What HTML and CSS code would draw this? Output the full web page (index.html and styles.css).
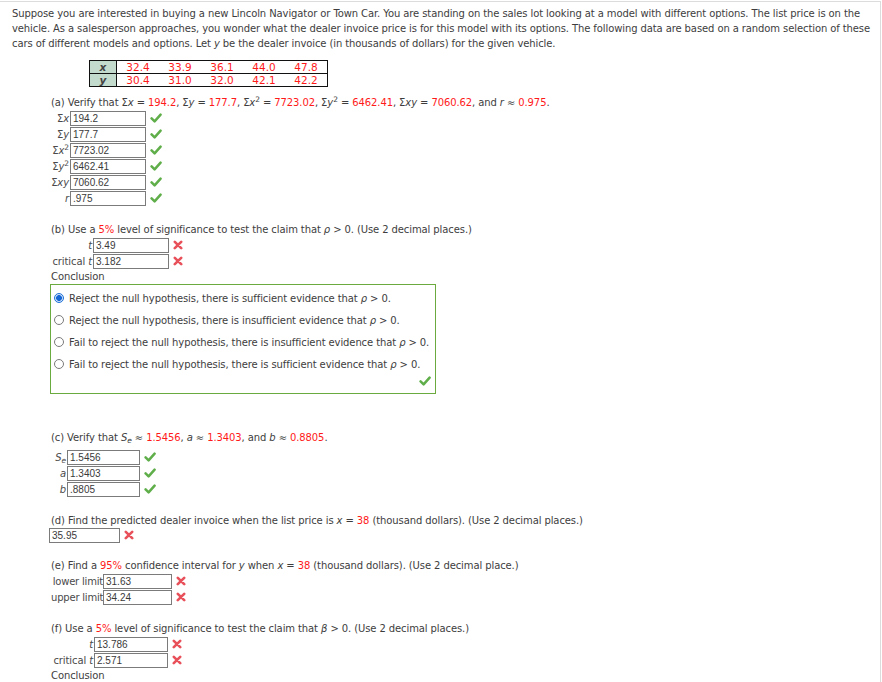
FILE: index.html
```html
<!DOCTYPE html>
<html>
<head>
<meta charset="utf-8">
<link rel="stylesheet" href="styles.css">
</head>
<body>
<div class="frame">
  <p class="intro">Suppose you are interested in buying a new Lincoln Navigator or Town Car. You are standing on the sales lot looking at a model with different options. The list price is on the<br>vehicle. As a salesperson approaches, you wonder what the dealer invoice price is for this model with its options. The following data are based on a random selection of these<br>cars of different models and options. Let <i>y</i> be the dealer invoice (in thousands of dollars) for the given vehicle.</p>

  <table class="data">
    <tr><th><i>x</i></th><td>32.4</td><td>33.9</td><td>36.1</td><td>44.0</td><td>47.8</td></tr>
    <tr><th><i>y</i></th><td>30.4</td><td>31.0</td><td>32.0</td><td>42.1</td><td>42.2</td></tr>
  </table>

  <div class="part">
    <div class="q qa">(a) Verify that Σ<i>x</i> = <span class="r">194.2</span>, Σ<i>y</i> = <span class="r">177.7</span>, Σ<i>x</i><sup>2</sup> = <span class="r">7723.02</span>, Σ<i>y</i><sup>2</sup> = <span class="r">6462.41</span>, Σ<i>xy</i> = <span class="r">7060.62</span>, and <i>r</i> ≈ <span class="r">0.975</span>.</div>
    <div class="rows ra">
      <div class="row"><span class="lab">Σ<i>x</i></span><span class="inp">194.2</span><svg class="ok" viewBox="0 0 12 10"><path d="M1.6 5.4 L4.6 8.4 L10.6 1.6"/></svg></div>
      <div class="row"><span class="lab">Σ<i>y</i></span><span class="inp">177.7</span><svg class="ok" viewBox="0 0 12 10"><path d="M1.6 5.4 L4.6 8.4 L10.6 1.6"/></svg></div>
      <div class="row"><span class="lab">Σ<i>x</i><sup>2</sup></span><span class="inp">7723.02</span><svg class="ok" viewBox="0 0 12 10"><path d="M1.6 5.4 L4.6 8.4 L10.6 1.6"/></svg></div>
      <div class="row"><span class="lab">Σ<i>y</i><sup>2</sup></span><span class="inp">6462.41</span><svg class="ok" viewBox="0 0 12 10"><path d="M1.6 5.4 L4.6 8.4 L10.6 1.6"/></svg></div>
      <div class="row"><span class="lab">Σ<i>xy</i></span><span class="inp">7060.62</span><svg class="ok" viewBox="0 0 12 10"><path d="M1.6 5.4 L4.6 8.4 L10.6 1.6"/></svg></div>
      <div class="row"><span class="lab"><i>r</i></span><span class="inp">.975</span><svg class="ok" viewBox="0 0 12 10"><path d="M1.6 5.4 L4.6 8.4 L10.6 1.6"/></svg></div>
    </div>

    <div class="q qb">(b) Use a <span class="r">5%</span> level of significance to test the claim that <i>ρ</i> &gt; 0. (Use 2 decimal places.)</div>
    <div class="rows rb">
      <div class="row"><span class="lab"><i>t</i></span><span class="inp">3.49</span><svg class="bad" viewBox="0 0 10 10"><path d="M1.8 1.8 L8.2 8.2 M8.2 1.8 L1.8 8.2"/></svg></div>
      <div class="row"><span class="lab">critical <i>t</i></span><span class="inp">3.182</span><svg class="bad" viewBox="0 0 10 10"><path d="M1.8 1.8 L8.2 8.2 M8.2 1.8 L1.8 8.2"/></svg></div>
    </div>
    <div class="q">Conclusion</div>
    <div class="choices">
      <div class="opt"><span class="radio on"></span><span class="opt-text">Reject the null hypothesis, there is sufficient evidence that <i>ρ</i> &gt; 0.</span></div>
      <div class="opt"><span class="radio"></span><span class="opt-text">Reject the null hypothesis, there is insufficient evidence that <i>ρ</i> &gt; 0.</span></div>
      <div class="opt"><span class="radio"></span><span class="opt-text">Fail to reject the null hypothesis, there is insufficient evidence that <i>ρ</i> &gt; 0.</span></div>
      <div class="opt"><span class="radio"></span><span class="opt-text">Fail to reject the null hypothesis, there is sufficient evidence that <i>ρ</i> &gt; 0.</span></div>
      <div class="choice-mark"><svg class="ok" viewBox="0 0 12 10"><path d="M1.6 5.4 L4.6 8.4 L10.6 1.6"/></svg></div>
    </div>

    <div class="q qc">(c) Verify that <i>S<sub>e</sub></i> ≈ <span class="r">1.5456</span>, <i>a</i> ≈ <span class="r">1.3403</span>, and <i>b</i> ≈ <span class="r">0.8805</span>.</div>
    <div class="rows rc">
      <div class="row"><span class="lab"><i>S<sub>e</sub></i></span><span class="inp">1.5456</span><svg class="ok" viewBox="0 0 12 10"><path d="M1.6 5.4 L4.6 8.4 L10.6 1.6"/></svg></div>
      <div class="row"><span class="lab"><i>a</i></span><span class="inp">1.3403</span><svg class="ok" viewBox="0 0 12 10"><path d="M1.6 5.4 L4.6 8.4 L10.6 1.6"/></svg></div>
      <div class="row"><span class="lab"><i>b</i></span><span class="inp">.8805</span><svg class="ok" viewBox="0 0 12 10"><path d="M1.6 5.4 L4.6 8.4 L10.6 1.6"/></svg></div>
    </div>

    <div class="q qd">(d) Find the predicted dealer invoice when the list price is <i>x</i> = <span class="r">38</span> (thousand dollars). (Use 2 decimal places.)</div>
    <div class="rows rd">
      <div class="row"><span class="inp">35.95</span><svg class="bad" viewBox="0 0 10 10"><path d="M1.8 1.8 L8.2 8.2 M8.2 1.8 L1.8 8.2"/></svg></div>
    </div>

    <div class="q qe">(e) Find a <span class="r">95%</span> confidence interval for <i>y</i> when <i>x</i> = <span class="r">38</span> (thousand dollars). (Use 2 decimal place.)</div>
    <div class="rows re">
      <div class="row"><span class="lab">lower limit</span><span class="inp">31.63</span><svg class="bad" viewBox="0 0 10 10"><path d="M1.8 1.8 L8.2 8.2 M8.2 1.8 L1.8 8.2"/></svg></div>
      <div class="row"><span class="lab">upper limit</span><span class="inp">34.24</span><svg class="bad" viewBox="0 0 10 10"><path d="M1.8 1.8 L8.2 8.2 M8.2 1.8 L1.8 8.2"/></svg></div>
    </div>

    <div class="q qf">(f) Use a <span class="r">5%</span> level of significance to test the claim that <i>β</i> &gt; 0. (Use 2 decimal places.)</div>
    <div class="rows rf">
      <div class="row"><span class="lab"><i>t</i></span><span class="inp">13.786</span><svg class="bad" viewBox="0 0 10 10"><path d="M1.8 1.8 L8.2 8.2 M8.2 1.8 L1.8 8.2"/></svg></div>
      <div class="row"><span class="lab">critical <i>t</i></span><span class="inp">2.571</span><svg class="bad" viewBox="0 0 10 10"><path d="M1.8 1.8 L8.2 8.2 M8.2 1.8 L1.8 8.2"/></svg></div>
    </div>
    <div class="q">Conclusion</div>
  </div>
</div>
</body>
</html>
```

FILE: styles.css
```css
html, body {
  margin: 0;
  padding: 0;
  background: #fff;
}
body {
  padding-top: 1px;
  font-family: "DejaVu Sans", Verdana, sans-serif;
  font-size: 10px;
  letter-spacing: -0.1px;
  color: #3d3d3d;
}
.frame {
  width: 881px;
  height: 681px;
  box-sizing: border-box;
  border-top: 1px solid #dcdcdc;
  border-right: 1px solid #dcdcdc;
  padding: 4px 0 0 12px;
  overflow: hidden;
}
.intro {
  margin: 0;
  line-height: 15px;
  white-space: nowrap;
}
.r { color: #ff1a1a; }
sup {
  font-size: 7.5px;
  line-height: 0;
  vertical-align: 4px;
}
sub {
  font-size: 7.5px;
  line-height: 0;
  vertical-align: -2px;
}

/* data table */
.data {
  margin: 9px 0 0 77px;
  border-collapse: collapse;
  border: 1px solid #111;
  letter-spacing: 0;
  font-size: 10.5px;
}
.data th {
  width: 26px;
  height: 12px;
  padding: 0;
  background: #c2dbcd;
  border-right: 1px solid #111;
  border-bottom: 1px solid #111;
  font-weight: bold;
  color: #444;
  line-height: 12px;
  text-align: center;
}
.data tr:last-child th { border-bottom: none; }
.data tr:first-child td { border-bottom: 1px solid #111; }
.data td {
  width: 42px;
  height: 12px;
  padding: 0;
  text-align: center;
  color: #ff1a1a;
  line-height: 12px;
}

/* parts */
.part {
  margin-left: 39px;
}
.q {
  line-height: 15px;
  white-space: nowrap;
}
.qa { margin-top: 8px; }
.qb { margin-top: 16px; }
.qc { margin-top: 36px; }
.qd { margin-top: 16px; }
.qe { margin-top: 15px; }
.qf { margin-top: 16px; }

.rows { display: flex; flex-direction: column; }
.rc { margin-top: 4px; }
.rd { margin-top: -1px; margin-left: -2px; }
.row {
  display: flex;
  align-items: center;
  height: 16px;
}
.lab {
  flex: none;
  text-align: right;
  color: #4a4a4a;
  padding-right: 1px;
  white-space: nowrap;
}
.inp {
  flex: none;
  box-sizing: border-box;
  height: 15px;
  border: 1px solid #7b7b7b;
  padding: 0 2px;
  font-family: "Liberation Sans", Arial, sans-serif;
  font-size: 10px;
  letter-spacing: 0;
  line-height: 13px;
  color: #3a3a3a;
  background: #fff;
}
.ra .lab { width: 18px; }
.ra .inp { width: 76px; }
.rb .lab { width: 41px; }
.rb .inp { width: 76px; }
.rf .lab { width: 42px; }
.rf .inp { width: 74px; }
.rc .lab { width: 15px; }
.rc .inp { width: 73px; }
.rd .inp { width: 71px; }
.re .lab { width: 52px; padding-right: 0; letter-spacing: -0.2px; }
.re .inp { width: 69px; }

svg.ok {
  flex: none;
  width: 12px;
  height: 10px;
  margin-left: 4px;
  fill: none;
  stroke: #5fae4a;
  stroke-width: 2.5;
  stroke-linecap: round;
  stroke-linejoin: round;
}
svg.bad {
  flex: none;
  width: 10px;
  height: 10px;
  margin-left: 4px;
  fill: none;
  stroke: #e8505a;
  stroke-width: 2.6;
  stroke-linecap: round;
}

/* choices */
.choices {
  margin-left: -1px;
  width: 386px;
  height: 110px;
  box-sizing: border-box;
  border: 1px solid #6aaa3e;
  padding: 2px 0 0 2px;
  display: flex;
  flex-direction: column;
}
.opt {
  display: flex;
  align-items: center;
  height: 22px;
  white-space: nowrap;
}
.radio {
  box-sizing: border-box;
  width: 10px;
  height: 10px;
  border-radius: 50%;
  border: 1px solid #7a7a7a;
  background: #fff;
  margin: 0 5px 0 1px;
  flex: none;
}
.radio.on {
  border-color: #1d6fd8;
  background: radial-gradient(circle, #1766d6 0 2.6px, #cfe0f7 3.2px 100%);
}
.choice-mark {
  margin-top: auto;
  display: flex;
  justify-content: flex-end;
  padding: 0 4px 7px 0;
}
```
